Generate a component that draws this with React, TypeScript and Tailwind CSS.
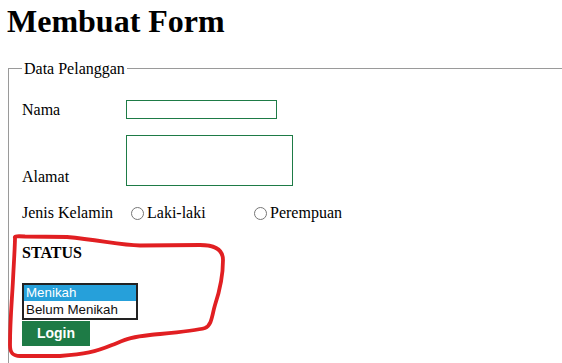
function Radio({ label, className }: { label: string; className?: string }) {
  return (
    <label className={"flex items-center " + (className ?? "")}>
      <span className="ml-[5px] mr-[3px] mt-[1px] h-[13px] w-[13px] rounded-full border border-[#767676] bg-white" />
      <span>{label}</span>
    </label>
  );
}

export default function App() {
  return (
    <div className="relative h-[363px] w-[562px] overflow-hidden bg-white text-black font-['Liberation_Serif','Times_New_Roman',serif] text-[16px]">
      <h1 className="pl-[7px] pt-[3px] text-[32px] font-bold leading-[37px]">Membuat Form</h1>

      <fieldset className="ml-2 mt-[19px] h-[320px] w-[560px] border border-[#9a9a9a] px-[13px]">
        <legend className="px-[2px] leading-[19px]">Data Pelanggan</legend>

        <div className="mt-[22px] flex h-[19px] items-center">
          <span className="w-[104px]">Nama</span>
          <input type="text" className="h-[19px] w-[151px] border border-[#1e7b46] bg-white outline-none" />
        </div>

        <div className="mt-[16px] flex items-end">
          <span className="w-[104px] leading-[19px]">Alamat</span>
          <textarea className="h-[51px] w-[167px] resize-none border border-[#1e7b46] bg-white outline-none" />
        </div>

        <div className="mt-[17px] flex h-[19px] items-center">
          <span className="w-[104px]">Jenis Kelamin</span>
          <Radio label="Laki-laki" className="w-[123px]" />
          <Radio label="Perempuan" />
        </div>

        <p className="mt-[21px] font-bold leading-[19px]">STATUS</p>

        <div className="mt-[21px] flex flex-col items-start font-['Liberation_Sans',Arial,sans-serif]">
          <div className="h-[37px] w-[116px] border-2 border-[#222] bg-white text-[13.33px] text-[#111]">
            <div className="flex h-[16px] items-center bg-[#26a0da] pl-[2px] text-white">Menikah</div>
            <div className="flex h-[17px] items-center pl-[2px]">Belum Menikah</div>
          </div>
          <button className="mt-[1px] h-[25px] w-[68px] bg-[#1e7b46] text-[14px] font-bold text-white">Login</button>
        </div>
      </fieldset>

      <svg className="pointer-events-none absolute left-0 top-0" width="562" height="363" viewBox="0 0 562 363">
        <path
          d="M15 238 C14 236, 18 236, 25 236.5 L67 237 C100 240, 120 245, 140 245.5 L200 245 C215 245, 223 250, 223 260 C223 275, 220 290, 215 305 C212 315, 212 325, 205 328 C195 331, 170 333, 150 335 C130 337, 125 340, 112 345 C95 352, 85 354, 60 356 L20 356 C12 356, 10 352, 10 345 C10 320, 12 300, 13 280 C14 260, 15 245, 15 238"
          fill="none"
          stroke="#e11f22"
          strokeWidth="3.8"
          strokeLinecap="round"
          strokeLinejoin="round"
        />
      </svg>
    </div>
  );
}
